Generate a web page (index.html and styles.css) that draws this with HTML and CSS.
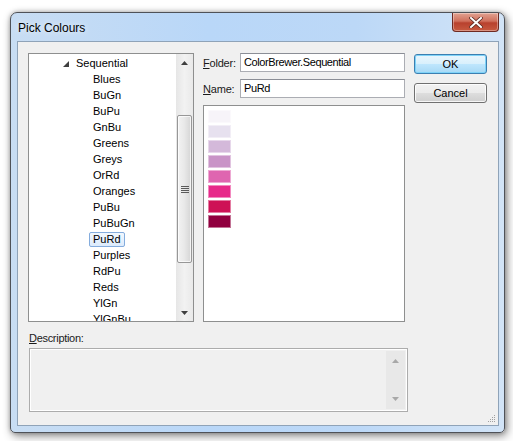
FILE: index.html
```html
<!DOCTYPE html>
<html>
<head>
<meta charset="utf-8">
<link rel="stylesheet" href="styles.css">
</head>
<body>
<div class="window">
  <div class="titlebar">
    <span class="title">Pick Colours</span>
    <div class="close">
      <svg width="14" height="11" viewBox="0 0 14 11"><path d="M2 1 L12 10 M12 1 L2 10" stroke="#5a2a22" stroke-width="3.6" stroke-linecap="square"/><path d="M2 1 L12 10 M12 1 L2 10" stroke="#fff" stroke-width="2" stroke-linecap="square"/></svg>
    </div>
  </div>
  <div class="client">
    <div class="top">
      <div class="tree">
        <div class="tree-items">
          <div class="node parent"><svg class="exp" width="6" height="6" viewBox="0 0 6 6"><path d="M6 0 L6 6 L0 6 Z" fill="#404040"/></svg><span>Sequential</span></div>
          <div class="node child"><span>Blues</span></div>
          <div class="node child"><span>BuGn</span></div>
          <div class="node child"><span>BuPu</span></div>
          <div class="node child"><span>GnBu</span></div>
          <div class="node child"><span>Greens</span></div>
          <div class="node child"><span>Greys</span></div>
          <div class="node child"><span>OrRd</span></div>
          <div class="node child"><span>Oranges</span></div>
          <div class="node child"><span>PuBu</span></div>
          <div class="node child"><span>PuBuGn</span></div>
          <div class="node child"><span class="sel">PuRd</span></div>
          <div class="node child"><span>Purples</span></div>
          <div class="node child"><span>RdPu</span></div>
          <div class="node child"><span>Reds</span></div>
          <div class="node child"><span>YlGn</span></div>
          <div class="node child"><span>YlGnBu</span></div>
        </div>
        <div class="vscroll">
          <div class="sarrow"><svg width="7" height="4" viewBox="0 0 7 4"><path d="M0 4 L3.5 0 L7 4 Z" fill="#404040"/></svg></div>
          <div class="track">
            <div class="thumb">
              <svg width="8" height="7" viewBox="0 0 8 7"><path d="M0 0.5 H8 M0 2.5 H8 M0 4.5 H8 M0 6.5 H8" stroke="#5a5a5a" stroke-width="1"/></svg>
            </div>
          </div>
          <div class="sarrow"><svg width="7" height="4" viewBox="0 0 7 4"><path d="M0 0 L3.5 4 L7 0 Z" fill="#404040"/></svg></div>
        </div>
      </div>
      <div class="mid">
        <div class="field"><label><u>F</u>older:</label><div class="input">ColorBrewer.Sequential</div></div>
        <div class="field"><label><u>N</u>ame:</label><div class="input">PuRd</div></div>
        <div class="swatches">
          <div class="sw" style="background:#f7f4f9"></div>
          <div class="sw" style="background:#e7e1ef"></div>
          <div class="sw" style="background:#d4b9da"></div>
          <div class="sw" style="background:#c994c7"></div>
          <div class="sw" style="background:#df65b0"></div>
          <div class="sw" style="background:#e7298a"></div>
          <div class="sw" style="background:#ce1256"></div>
          <div class="sw" style="background:#91003f"></div>
        </div>
      </div>
      <div class="buttons">
        <div class="btn default">OK</div>
        <div class="btn">Cancel</div>
      </div>
    </div>
    <div class="desc-label"><u>D</u>escription:</div>
    <div class="desc">
      <div class="desc-scroll">
        <svg width="7" height="4" viewBox="0 0 7 4"><path d="M0 4 L3.5 0 L7 4 Z" fill="#a8a8a8"/></svg>
        <svg width="7" height="4" viewBox="0 0 7 4"><path d="M0 0 L3.5 4 L7 0 Z" fill="#a8a8a8"/></svg>
      </div>
    </div>
    <div class="grip-row">
      <svg class="grip" width="9" height="9" viewBox="0 0 9 9">
        <g fill="#a0a0a0">
          <rect x="7" y="1" width="1" height="1"/>
          <rect x="5" y="3" width="1" height="1"/><rect x="7" y="3" width="1" height="1"/>
          <rect x="3" y="5" width="1" height="1"/><rect x="5" y="5" width="1" height="1"/><rect x="7" y="5" width="1" height="1"/>
          <rect x="1" y="7" width="1" height="1"/><rect x="3" y="7" width="1" height="1"/><rect x="5" y="7" width="1" height="1"/><rect x="7" y="7" width="1" height="1"/>
        </g>
      </svg>
    </div>
  </div>
</div>
</body>
</html>
```
FILE: styles.css
```css
* { box-sizing: border-box; }
html, body { margin: 0; padding: 0; }
body {
  background: #ffffff;
  width: 513px;
  height: 441px;
  overflow: hidden;
  font-family: "Liberation Sans", Arial, sans-serif;
  font-size: 11px;
  color: #000;
  padding: 12px 0 0 10px;
}
.window {
  width: 495px;
  height: 421px;
  border: 1px solid #4f5258;
  border-radius: 7px 7px 5px 5px;
  background: linear-gradient(90deg, #c8ddf3 0%, #b9d7f8 40%, #bcd8f7 70%, #d2e4f7 100%);
  box-shadow: 2px 3px 10px rgba(0,0,0,0.45), 0 0 4px rgba(0,0,0,0.25);
  display: flex;
  flex-direction: column;
  padding: 0 5px 0 6px;
}
.titlebar {
  height: 28px;
  display: flex;
  justify-content: space-between;
  align-items: flex-start;
}
.title {
  font-size: 12px;
  margin: 8px 0 0 1px;
  color: #000;
  text-shadow: 0 0 6px rgba(255,255,255,0.9);
}
.close {
  width: 47px;
  height: 19px;
  margin-right: 0;
  border: 1px solid #6e2a22;
  border-top: none;
  border-radius: 0 0 4px 4px;
  background: linear-gradient(180deg, #e2a392 0%, #d0705c 45%, #b8412e 55%, #c75a40 100%);
  display: flex;
  align-items: center;
  justify-content: center;
  box-shadow: inset 0 0 0 1px rgba(255,255,255,0.35);
}
.client {
  width: 482px;
  height: 385px;
  background: #f0f0f0;
  border: 1px solid #8fa3b8;
  display: flex;
  flex-direction: column;
}
.top {
  display: flex;
  align-items: flex-start;
  padding: 11px 0 0 10px;
}
.tree {
  width: 166px;
  height: 269px;
  border: 1px solid #8e8f8f;
  background: #fff;
  display: flex;
  overflow: hidden;
}
.tree-items {
  flex: 1;
  padding-top: 1px;
  overflow: hidden;
}
.node {
  height: 16px;
  line-height: 16px;
  display: flex;
  align-items: center;
  white-space: nowrap;
}
.node.parent { padding-left: 34px; }
.node.parent .exp { margin-right: 7px; margin-top: 1px; }
.node.child span { padding-left: 64px; }
.node.child span.sel {
  margin-left: 60px;
  padding: 0 3px;
  height: 15px;
  line-height: 13px;
  border: 1px solid #84acdd;
  border-radius: 2px;
  background: linear-gradient(180deg, #f2f8fe 0%, #dcebfc 100%);
}
.vscroll {
  width: 17px;
  display: flex;
  flex-direction: column;
  background: linear-gradient(90deg, #e6e6e6 0%, #f2f2f2 50%, #e9e9e9 100%);
}
.sarrow {
  height: 17px;
  display: flex;
  align-items: center;
  justify-content: center;
}
.track {
  flex: 1;
  padding-top: 44px;
}
.thumb {
  width: 15px;
  height: 148px;
  margin-left: 1px;
  border: 1px solid #979797;
  border-radius: 2px;
  background: linear-gradient(90deg, #f3f3f3 0%, #e8e8e8 50%, #d5d5d5 100%);
  box-shadow: inset 0 0 0 1px rgba(255,255,255,0.7);
  display: flex;
  align-items: center;
  justify-content: center;
}
.mid {
  width: 202px;
  margin-left: 9px;
  display: flex;
  flex-direction: column;
}
.field {
  height: 19px;
  display: flex;
  align-items: center;
  margin-bottom: 7px;
}
.field label {
  width: 37px;
  color: #1a1a1a;
  letter-spacing: -0.2px;
}
.input {
  width: 165px;
  height: 19px;
  border: 1px solid #abadb3;
  border-top-color: #8b8e96;
  background: #fff;
  padding: 0 3px;
  line-height: 17px;
  font-size: 11px;
  letter-spacing: -0.4px;
  white-space: nowrap;
}
.swatches {
  height: 217px;
  border: 1px solid #8e8f8f;
  background: #fff;
  padding: 4px 0 0 4px;
  display: flex;
  flex-direction: column;
}
.sw {
  width: 23px;
  height: 13px;
  margin-bottom: 2px;
  box-shadow: inset 0 0 0 1px rgba(255,255,255,0.45);
}
.buttons {
  margin-left: 9px;
  padding-top: 1px;
  display: flex;
  flex-direction: column;
  gap: 9px;
}
.btn {
  width: 73px;
  height: 20px;
  border: 1px solid #707070;
  border-radius: 3px;
  background: linear-gradient(180deg, #f2f2f2 0%, #ebebeb 48%, #dddddd 52%, #cfcfcf 100%);
  box-shadow: inset 0 0 0 1px rgba(255,255,255,0.8);
  text-align: center;
  line-height: 18px;
}
.btn.default {
  border-color: #3c7fb1;
  background: linear-gradient(180deg, #eaf6fd 0%, #d9f0fc 48%, #bee6fd 52%, #a7d9f5 100%);
  box-shadow: inset 0 0 0 1px #7fd3f8;
}
.desc-label {
  margin: 10px 0 0 11px;
  height: 13px;
  line-height: 13px;
  color: #1a1a1a;
  letter-spacing: -0.3px;
}
.desc {
  margin: 3px 0 0 11px;
  width: 379px;
  height: 64px;
  border: 1px solid #acacac;
  box-shadow: inset 0 0 0 1px #ffffff;
  background: #f0f0f0;
  display: flex;
  justify-content: flex-end;
  padding: 2px 2px 2px 0;
}
.desc-scroll {
  width: 19px;
  background: #e8e8e8;
  display: flex;
  flex-direction: column;
  justify-content: space-between;
  align-items: center;
  padding: 8px 0 8px 0;
}
.grip-row {
  margin-top: auto;
  display: flex;
  justify-content: flex-end;
  padding: 0 2px 2px 0;
}
```
